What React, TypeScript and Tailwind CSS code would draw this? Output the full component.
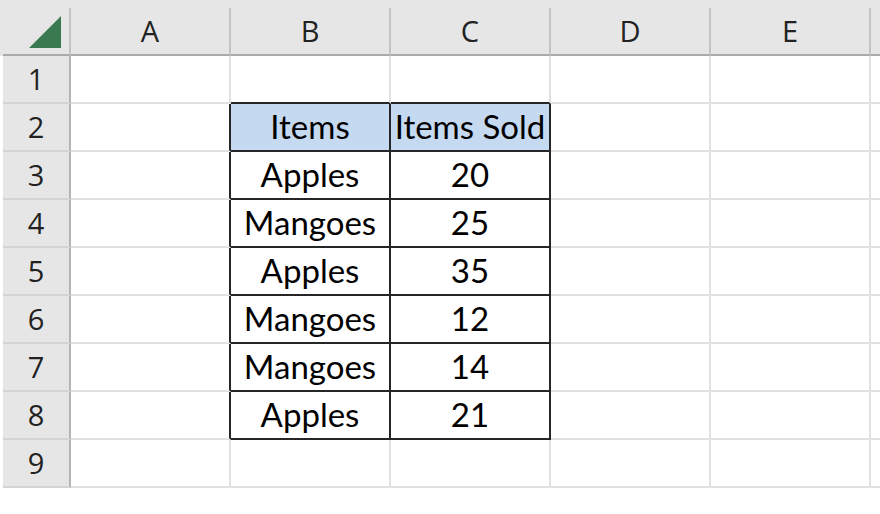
import React from 'react';

const COLUMNS = ['A', 'B', 'C', 'D', 'E'];

const ROWS: string[][] = [
  ['', '', ''],
  ['', 'Items', 'Items Sold'],
  ['', 'Apples', '20'],
  ['', 'Mangoes', '25'],
  ['', 'Apples', '35'],
  ['', 'Mangoes', '12'],
  ['', 'Mangoes', '14'],
  ['', 'Apples', '21'],
  ['', '', ''],
];

const headFont = { fontFamily: '"Open Sans", "Noto Sans", sans-serif' };
const cellFont = { fontFamily: 'Lato, "Liberation Sans", sans-serif' };

// cells B2:C8 carry the black table border, A2:A8 draw its left edge, B1:C1 its top edge
const cellClass = (row: number, col: number) => {
  const inTable = row >= 2 && row <= 8;
  const right = (inTable && col <= 2) ? 'border-r-[#262626]' : 'border-r-[#e1e1e1]';
  const bottom = (row === 1 && (col === 1 || col === 2)) || (inTable && (col === 1 || col === 2)) ? 'border-b-[#262626]' : 'border-b-[#e1e1e1]';
  const fill = row === 2 && (col === 1 || col === 2) ? 'bg-[#c5d9f0]' : 'bg-white';
  return `w-[160px] shrink-0 h-full flex items-center justify-center border-r-2 border-b-2 ${right} ${bottom} ${fill}`;
};

export default function App() {
  return (
    <div className="w-[880px] h-[514px] bg-white overflow-hidden">
      <div className="flex h-[56px] pt-2 pl-[3px] bg-[#e6e6e6]">
        <div className="w-[68px] shrink-0 h-full flex items-start justify-end pr-[8px] pt-[8px] border-r-2 border-b-2 border-r-[#c4c4c4] border-b-[#ababab]">
          <svg width="32" height="32" viewBox="0 0 32 32">
            <polygon points="32,0 32,32 0,32" fill="#3b7a50" />
          </svg>
        </div>
        {COLUMNS.map((c) => (
          <div
            key={c}
            style={headFont}
            className="w-[160px] shrink-0 h-full flex items-center justify-center text-[29px] text-[#222] border-r-2 border-b-2 border-r-[#c4c4c4] border-b-[#ababab]"
          >
            {c}
          </div>
        ))}
        <div className="flex-1 h-full border-b-2 border-b-[#ababab]" />
      </div>
      {ROWS.map((cells, i) => {
        const row = i + 1;
        return (
          <div key={row} className="flex h-[48px] pl-[3px]">
            <div
              style={headFont}
              className="w-[68px] shrink-0 h-full flex items-center justify-center text-[29px] text-[#222] bg-[#e6e6e6] border-r-2 border-b-2 border-r-[#b4b4b4] border-b-[#d4d4d4]"
            >
              {row}
            </div>
            {[0, 1, 2, 3, 4].map((col) => (
              <div key={col} style={cellFont} className={`${cellClass(row, col)} text-[33px] text-black whitespace-nowrap`}>
                {cells[col] ?? ''}
              </div>
            ))}
            <div className="flex-1 h-full border-b-2 border-b-[#e1e1e1]" />
          </div>
        );
      })}
    </div>
  );
}
